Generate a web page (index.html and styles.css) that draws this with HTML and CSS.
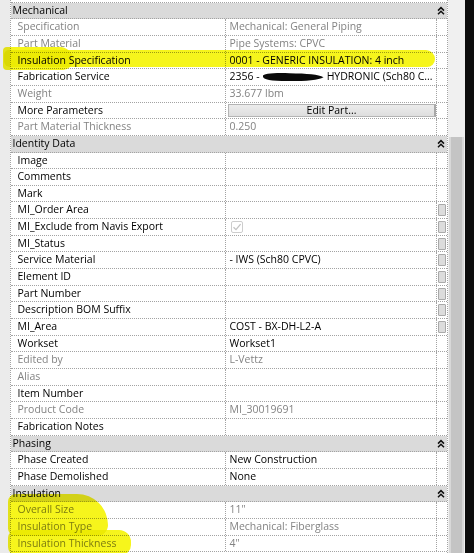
FILE: index.html
```html
<!DOCTYPE html>
<html>
<head>
<meta charset="utf-8">
<link rel="stylesheet" href="styles.css">
</head>
<body>
<div class="panel">
  <div class="gutter"></div>
  <div class="grid">
    <div class="cut"></div>

    <div class="row hdr"><div class="n">Mechanical</div><div class="x"><svg class="chev" viewBox="0 0 8 9"><path d="M1 4.6 L4 1.6 L7 4.6 M1 8.2 L4 5.2 L7 8.2"/></svg></div></div>
    <div class="row ro"><div class="n">Specification</div><div class="v">Mechanical: General Piping</div><div class="x"></div></div>
    <div class="row ro"><div class="n">Part Material</div><div class="v">Pipe Systems: CPVC</div><div class="x"></div></div>
    <div class="row"><div class="n">Insulation Specification</div><div class="v">0001 - GENERIC INSULATION: 4 inch</div><div class="x"></div></div>
    <div class="row"><div class="n">Fabrication Service</div><div class="v"><span>2356 -</span><svg class="redact" viewBox="0 0 68 10"><path d="M1 4.2 C1 1 12 0.4 30 0.8 C50 1.2 62 2 67.5 5.2 C62 8.2 48 9.6 28 9.5 C10 9.4 1 8 1 4.2 Z"/></svg><span>HYDRONIC (Sch80 C...</span></div><div class="x"></div></div>
    <div class="row ro"><div class="n">Weight</div><div class="v">33.677 lbm</div><div class="x"></div></div>
    <div class="row"><div class="n">More Parameters</div><div class="v btncell"><div class="btn">Edit Part...</div></div><div class="x"></div></div>
    <div class="row ro"><div class="n">Part Material Thickness</div><div class="v">0.250</div><div class="x"></div></div>

    <div class="row hdr"><div class="n">Identity Data</div><div class="x"><svg class="chev" viewBox="0 0 8 9"><path d="M1 4.6 L4 1.6 L7 4.6 M1 8.2 L4 5.2 L7 8.2"/></svg></div></div>
    <div class="row"><div class="n">Image</div><div class="v"></div><div class="x"></div></div>
    <div class="row"><div class="n">Comments</div><div class="v"></div><div class="x"></div></div>
    <div class="row"><div class="n">Mark</div><div class="v"></div><div class="x"></div></div>
    <div class="row"><div class="n">MI_Order Area</div><div class="v"></div><div class="x"><div class="rb"></div></div></div>
    <div class="row"><div class="n">MI_Exclude from Navis Export</div><div class="v"><svg class="chk" viewBox="0 0 12 12"><rect x="0.5" y="0.5" width="11" height="11" rx="1.5" class="box"/><path d="M2.5 6.2 L5 8.6 L9.6 3.2" class="tick"/></svg></div><div class="x"><div class="rb"></div></div></div>
    <div class="row"><div class="n">MI_Status</div><div class="v"></div><div class="x"><div class="rb"></div></div></div>
    <div class="row"><div class="n">Service Material</div><div class="v">- IWS (Sch80 CPVC)</div><div class="x"><div class="rb"></div></div></div>
    <div class="row"><div class="n">Element ID</div><div class="v"></div><div class="x"><div class="rb"></div></div></div>
    <div class="row"><div class="n">Part Number</div><div class="v"></div><div class="x"><div class="rb"></div></div></div>
    <div class="row"><div class="n">Description BOM Suffix</div><div class="v"></div><div class="x"><div class="rb"></div></div></div>
    <div class="row"><div class="n">MI_Area</div><div class="v">COST - BX-DH-L2-A</div><div class="x"><div class="rb"></div></div></div>
    <div class="row"><div class="n">Workset</div><div class="v">Workset1</div><div class="x"></div></div>
    <div class="row ro"><div class="n">Edited by</div><div class="v">L-Vettz</div><div class="x"></div></div>
    <div class="row ro"><div class="n">Alias</div><div class="v"></div><div class="x"></div></div>
    <div class="row"><div class="n">Item Number</div><div class="v"></div><div class="x"></div></div>
    <div class="row ro"><div class="n">Product Code</div><div class="v">MI_30019691</div><div class="x"></div></div>
    <div class="row"><div class="n">Fabrication Notes</div><div class="v"></div><div class="x"></div></div>

    <div class="row hdr"><div class="n">Phasing</div><div class="x"><svg class="chev" viewBox="0 0 8 9"><path d="M1 4.6 L4 1.6 L7 4.6 M1 8.2 L4 5.2 L7 8.2"/></svg></div></div>
    <div class="row"><div class="n">Phase Created</div><div class="v">New Construction</div><div class="x"></div></div>
    <div class="row"><div class="n">Phase Demolished</div><div class="v">None</div><div class="x"></div></div>

    <div class="row hdr"><div class="n">Insulation</div><div class="x"><svg class="chev" viewBox="0 0 8 9"><path d="M1 4.6 L4 1.6 L7 4.6 M1 8.2 L4 5.2 L7 8.2"/></svg></div></div>
    <div class="row ro"><div class="n">Overall Size</div><div class="v">11"</div><div class="x"></div></div>
    <div class="row ro"><div class="n">Insulation Type</div><div class="v">Mechanical: Fiberglass</div><div class="x"></div></div>
    <div class="row ro"><div class="n">Insulation Thickness</div><div class="v">4"</div><div class="x"></div></div>
  </div>
  <div class="scroll"><div class="thumb"></div></div>
  <div class="edge"></div>

  <div class="hl hl-a"></div>
  <div class="hl hl-b"></div>
  <div class="hl hl-c"></div>
  <div class="hl hl-d"></div>
</div>
</body>
</html>
```

FILE: styles.css
```css
html, body {
  margin: 0;
  padding: 0;
  background: #ffffff;
}

body {
  font-family: "Open Sans", "Noto Sans", sans-serif;
  font-size: 10.5px;
  color: #000000;
}

.panel {
  position: relative;
  display: flex;
  width: 474px;
  height: 553px;
  overflow: hidden;
  background: #ffffff;
}

.gutter {
  flex: none;
  width: 10px;
  background: #ebebeb;
}

.grid {
  flex: none;
  width: 438px;
  box-sizing: border-box;
  border-left: 1px dotted #a3a3a3;
  border-right: 1px dotted #a3a3a3;
  background: #ffffff;
}

.cut {
  height: 2.6px;
  box-sizing: border-box;
  border-bottom: 1px dotted #a3a3a3;
}

.row {
  display: grid;
  grid-template-columns: 215px 211px 10px;
  height: 16.66px;
  box-sizing: border-box;
  border-bottom: 1px dotted #a3a3a3;
  line-height: 15.66px;
  white-space: nowrap;
}

.n {
  padding-left: 6.5px;
  border-right: 1px dotted #a3a3a3;
  overflow: hidden;
}

.v {
  padding-left: 3.5px;
  border-right: 1px dotted #a3a3a3;
  overflow: hidden;
  display: flex;
  align-items: center;
}

.x {
  display: flex;
  align-items: center;
  justify-content: center;
}

.ro .n,
.ro .v {
  color: #838383;
}

.hdr {
  background: #dadada;
}

.hdr .n {
  grid-column: 1 / 3;
  padding-left: 1.5px;
  border-right: none;
  color: #000000;
}

.chev {
  width: 8px;
  height: 9px;
  margin-left: -3px;
}

.chev path {
  fill: none;
  stroke: #111111;
  stroke-width: 1.5;
}

.redact {
  flex: none;
  width: 62px;
  height: 10px;
  margin: 0 3px 0 2px;
}

.redact path {
  fill: #0a0a0a;
}

.btncell {
  padding: 1px 0 1px 2px;
  align-items: stretch;
}

.btn {
  flex: 1;
  box-sizing: border-box;
  border: 1px solid #b4b4b4;
  border-right: 2px solid #a8a8a8;
  background: linear-gradient(#ececec, #dedede);
  text-align: center;
  line-height: 11.5px;
  color: #000000;
}

.rb {
  width: 8px;
  height: 12px;
  margin-left: -1px;
  box-sizing: border-box;
  border: 1px solid #a9a9a9;
  border-radius: 1px;
  background: #dcdcdc;
}

.chk {
  width: 12px;
  height: 12px;
  margin-left: 1px;
}

.chk .box {
  fill: #ffffff;
  stroke: #cdcdcd;
}

.chk .tick {
  fill: none;
  stroke: #c2c2c2;
  stroke-width: 1.3;
}

.scroll {
  flex: none;
  width: 17px;
  display: flex;
  flex-direction: column;
  background: #f0f0f0;
  padding-top: 137px;
  box-sizing: border-box;
}

.thumb {
  flex: 1;
  margin: 0 1px 0 1px;
  background: #c4c4c4;
  border-left: 2px solid #d8d8d8;
  border-right: 2px solid #d8d8d8;
}

.edge {
  flex: none;
  width: 9px;
  background: #0d0d0d;
}

.hl {
  position: absolute;
  background: #f6f51c;
  mix-blend-mode: multiply;
}

.hl-a {
  left: 4px;
  top: 50px;
  width: 431px;
  height: 17px;
  border-radius: 5px 9px 8px 6px;
}

.hl-b {
  left: 3px;
  top: 47px;
  width: 70px;
  height: 23px;
  border-radius: 12px 40px 30px 12px;
}

.hl-c {
  left: 8px;
  top: 494px;
  width: 100px;
  height: 42px;
  border-radius: 10px 40px 14px 10px;
}

.hl-d {
  left: 8px;
  top: 530px;
  width: 123px;
  height: 25px;
  border-radius: 8px 12px 10px 8px;
}
```
